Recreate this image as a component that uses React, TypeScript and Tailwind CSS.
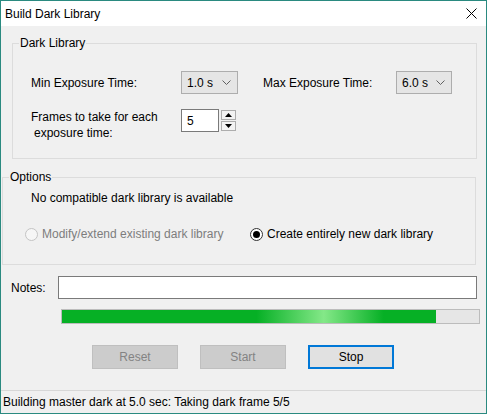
import React from "react";

const FONT = "font-['Liberation_Sans',Arial,sans-serif]";

const Combo = ({ value, width }: { value: string; width: string }) => (
  <div
    className={`${width} h-[23px] bg-[#e5e5e5] border border-[#adadad] flex items-center justify-between pl-[5px] pr-[5px]`}
  >
    <span>{value}</span>
    <svg width="9" height="5" viewBox="0 0 9 5" className="mr-[1px]">
      <path d="M0.5 0.5 L4.5 4.5 L8.5 0.5" fill="none" stroke="#606060" strokeWidth="1" />
    </svg>
  </div>
);

const Spin = () => (
  <div className="flex flex-col gap-[1px] ml-[2px] mt-[1px]">
    <div className="w-[15px] h-[10px] bg-[#f3f3f3] border border-[#adadad] flex items-center justify-center">
      <svg width="7" height="4" viewBox="0 0 7 4">
        <path d="M3.5 0 L7 4 L0 4 Z" fill="#000" />
      </svg>
    </div>
    <div className="w-[15px] h-[10px] bg-[#f3f3f3] border border-[#adadad] flex items-center justify-center">
      <svg width="7" height="4" viewBox="0 0 7 4">
        <path d="M0 0 L7 0 L3.5 4 Z" fill="#000" />
      </svg>
    </div>
  </div>
);

const Radio = ({ checked, disabled, label }: { checked?: boolean; disabled?: boolean; label: string }) => (
  <div className="flex items-center h-[16px]">
    <div
      className={`w-[13px] h-[13px] rounded-full border flex items-center justify-center ${
        disabled ? "border-[#c4c4c4] bg-[#f6f6f6]" : "border-[#333333] bg-white"
      }`}
    >
      {checked && <div className="w-[7px] h-[7px] rounded-full bg-[#000]" />}
    </div>
    <span className={`ml-[4px] ${disabled ? "text-[#7d7d7d]" : "text-black"}`}>{label}</span>
  </div>
);

const Button = ({ label, disabled, focused }: { label: string; disabled?: boolean; focused?: boolean }) => (
  <div
    className={`w-[86px] h-[24px] flex items-center justify-center ${
      focused
        ? "border-2 border-[#0078d7] bg-[#e1e1e1] text-black"
        : disabled
        ? "border border-[#bfbfbf] bg-[#cccccc] text-[#838383]"
        : "border border-[#adadad] bg-[#e1e1e1] text-black"
    }`}
  >
    {label}
  </div>
);

export default function App() {
  return (
    <div
      className={`${FONT} text-[12px] leading-[16px] text-black w-[487px] h-[414px] bg-[#f0f0f0] border border-[#2a8a80] flex flex-col overflow-hidden`}
    >
      {/* Title bar */}
      <div className="h-[25px] bg-white flex items-center justify-between pl-[4px] pr-[9px] shrink-0">
        <span>Build Dark Library</span>
        <svg width="11" height="11" viewBox="0 0 11 11">
          <path d="M0.5 0.5 L10.5 10.5 M10.5 0.5 L0.5 10.5" stroke="#000" strokeWidth="1" />
        </svg>
      </div>

      {/* Dark Library group */}
      <fieldset className="mt-[9px] ml-[11px] w-[465px] h-[124px] border border-[#dcdcdc] shrink-0">
        <legend className="ml-[6px] px-[1px]">Dark Library</legend>
        <div className="pl-[18px] pt-[20px] flex flex-col">
          <div className="flex items-center">
            <span className="w-[150px]">Min Exposure Time:</span>
            <Combo value="1.0 s" width="w-[57px]" />
            <span className="ml-[25px] w-[133px]">Max Exposure Time:</span>
            <Combo value="6.0 s" width="w-[56px]" />
          </div>
          <div className="flex mt-[15px]">
            <div className="w-[150px] flex flex-col">
              <span>Frames to take for each</span>
              <span className="pl-[3px]">exposure time:</span>
            </div>
            <div className="w-[38px] h-[23px] bg-white border border-[#7a7a7a] flex items-center pl-[5px]">5</div>
            <Spin />
          </div>
        </div>
      </fieldset>

      {/* Options group */}
      <fieldset className="mt-[10px] ml-[1px] w-[474px] h-[96px] border border-[#dcdcdc] shrink-0">
        <legend className="ml-[6px] px-[1px]">Options</legend>
        <div className="pl-[28px] pt-[5px]">No compatible dark library is available</div>
        <div className="flex mt-[20px] pl-[22px]">
          <div className="w-[225px]">
            <Radio disabled label="Modify/extend existing dark library" />
          </div>
          <Radio checked label="Create entirely new dark library" />
        </div>
      </fieldset>

      {/* Notes */}
      <div className="mt-[11px] flex items-center h-[23px] shrink-0">
        <span className="ml-[10px] w-[47px]">Notes:</span>
        <div className="w-[419px] h-[23px] bg-white border border-[#7a7a7a]" />
      </div>

      {/* Progress */}
      <div className="mt-[10px] ml-[60px] w-[419px] h-[15px] bg-[#e6e6e6] border border-[#bcbcbc] shrink-0">
        <div className="w-[374px] h-full bg-[linear-gradient(90deg,#06b025_0%,#06b025_52%,#84e888_70%,#06b025_86%,#06b025_100%)]" />
      </div>

      {/* Buttons */}
      <div className="mt-[21px] ml-[91px] flex gap-[22px] shrink-0">
        <Button label="Reset" disabled />
        <Button label="Start" disabled />
        <Button label="Stop" focused />
      </div>

      {/* Status bar */}
      <div className="mt-[21px] h-[23px] border-t border-[#d7d7d7] flex items-center pl-[2px] shrink-0">
        Building master dark at 5.0 sec: Taking dark frame 5/5
      </div>
    </div>
  );
}
